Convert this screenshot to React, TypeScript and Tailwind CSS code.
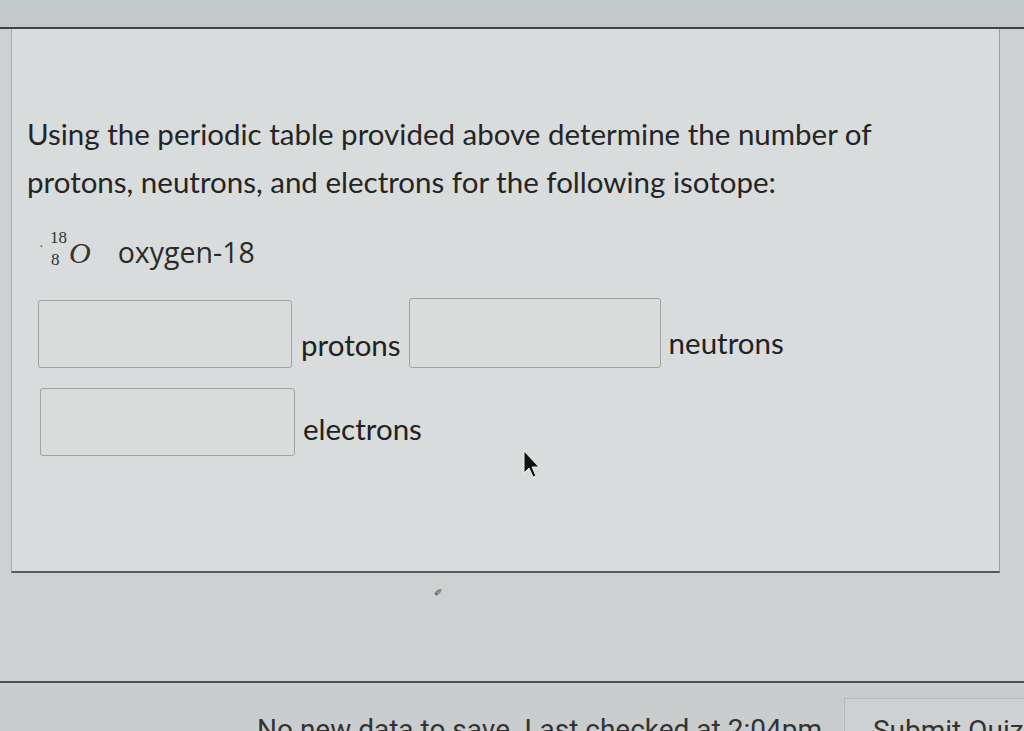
import React from "react";

export default function App() {
  return (
    <div className="w-[1024px] h-[731px] overflow-hidden bg-[#cdd1d2] flex flex-col" style={{ fontFamily: "Lato, 'Open Sans', sans-serif" }}>
      <div className="h-[29px] shrink-0 bg-[#c3c8c9] border-b-2 border-[#3e4244]" />
      <div className="relative ml-[11px] w-[989px] h-[544px] shrink-0 bg-[#d9dcdc] border-l border-r border-b-2 border-l-[#a9adae] border-r-[#9a9ea0] border-b-[#55595b] pt-[81px] pl-[15px]">
        <p className="text-[29.5px] leading-[48px] text-[#252525]">
          Using the periodic table provided above determine the number of
          <br />
          protons, neutrons, and electrons for the following isotope:
        </p>
        <div className="flex items-end mt-[19px] h-[46px]">
          <span className="relative inline-block w-[30px] h-[44px] ml-[10px]" style={{ fontFamily: "'Liberation Serif', serif" }}>
            <span className="absolute left-[2px] top-[13px] text-[14px] leading-none text-[#555]">·</span>
            <span className="absolute left-[13px] top-[2px] text-[17px] leading-none text-[#333]">18</span>
            <span className="absolute left-[14px] top-[24px] text-[17px] leading-none text-[#333]">8</span>
          </span>
          <span className="text-[30px] italic leading-none text-[#333] mb-[3px] ml-[2px]" style={{ fontFamily: "'Liberation Serif', serif" }}>O</span>
          <span className="ml-[27px] text-[28.5px] leading-none mb-[5px] text-[#2a2a2a]" style={{ fontFamily: "'Open Sans', sans-serif" }}>oxygen-18</span>
        </div>
        <div className="flex items-center mt-[29px]">
          <div className="w-[254px] h-[68px] ml-[11px] border border-[#9ea2a3] rounded-[3px] bg-[#dadcdc]" />
          <span className="ml-[9px] mt-[22px] text-[29.5px] leading-none text-[#222]">protons</span>
          <div className="w-[252px] h-[70px] ml-[8px] -mt-[3px] border border-[#9ea2a3] rounded-[3px] bg-[#dadcdc]" />
          <span className="ml-[8px] mt-[18px] text-[29.5px] leading-none text-[#222]">neutrons</span>
        </div>
        <div className="flex items-center mt-[20px]">
          <div className="w-[255px] h-[68px] ml-[13px] border border-[#9ea2a3] rounded-[3px] bg-[#dadcdc]" />
          <span className="ml-[8px] mt-[14px] text-[29.5px] leading-none text-[#222]">electrons</span>
        </div>
        <svg className="absolute left-[510px] top-[420px]" width="20" height="30" viewBox="0 0 20 30">
          <path d="M2 2 L2 24 L7 19 L11 28 L14 27 L10 18 L17 18 Z" fill="#111" stroke="#eee" strokeWidth="1" />
        </svg>
      </div>
      <div className="relative h-[108px] shrink-0">
        <span className="absolute left-[434px] top-[12px] text-[10px] text-[#333]">✐</span>
      </div>
      <div className="flex-1 border-t-2 border-[#4a4e50] bg-[#c9cdce] flex">
        <div className="ml-[257px] mt-[33px] text-[28px] leading-none text-[#333] whitespace-nowrap" style={{ fontFamily: "Roboto, sans-serif" }}>
          No new data to save. Last checked at 2:04pm
        </div>
        <div className="ml-[22px] mt-[15px] w-[200px] h-[60px] border-l border-t border-[#b5b9ba] bg-[#cdd1d2] pt-[18px] pl-[28px] text-[28px] leading-none text-[#333] whitespace-nowrap" style={{ fontFamily: "Roboto, sans-serif" }}>
          Submit Quiz
        </div>
      </div>
    </div>
  );
}
